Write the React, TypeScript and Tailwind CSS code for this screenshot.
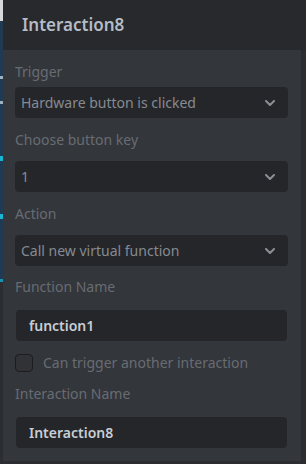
import { useState } from 'react'

function Chevron() {
  return (
    <svg width="10" height="6" viewBox="0 0 10 6" className="shrink-0">
      <polyline points="1,1 5,5 9,1" fill="none" stroke="#8a8f96" strokeWidth="2" strokeLinecap="round" strokeLinejoin="round" />
    </svg>
  )
}

function Label({ text, className = '' }: { text: string; className?: string }) {
  return <p className={`h-[20px] text-[14px] leading-[20px] text-[#686c72] ${className}`}>{text}</p>
}

function Select({ value, className = '' }: { value: string; className?: string }) {
  return (
    <div className={`flex h-[31px] items-center justify-between rounded-[4px] bg-[#252629] pl-[6px] pr-[13px] ${className}`}>
      <span className="text-[14px] leading-[20px] text-[#868b92]">{value}</span>
      <Chevron />
    </div>
  )
}

function TextInput({ value, className = '' }: { value: string; className?: string }) {
  return (
    <div className={`mx-[1px] flex h-[31px] items-center rounded-[4px] bg-[#252629] pl-[13px] ${className}`}>
      <span className="text-[14px] font-semibold leading-[20px] text-[#c8cdd4]">{value}</span>
    </div>
  )
}

export default function App() {
  const [checked, setChecked] = useState(false)

  return (
    <div className="flex h-[464px] w-[306px] bg-[#2b2d31] font-['Noto_Sans',sans-serif]">
      {/* bits of the canvas behind the panel */}
      <div className="flex w-[3px] shrink-0 flex-col">
        <div className="h-[21px] bg-[#d6d8da]" />
        <div className="h-[55px] bg-[#1f3a52]" />
        <div className="h-[3px] bg-[#9fb0bf]" />
        <div className="h-[22px] bg-[#1f3a52]" />
        <div className="h-[3px] bg-[#9fb0bf]" />
        <div className="h-[52px] bg-[#1f3a52]" />
        <div className="h-[5px] bg-[#19b6d4]" />
        <div className="h-[53px] bg-[#1f3a52]" />
        <div className="h-[5px] bg-[#19b6d4]" />
        <div className="h-[60px] bg-[#1f3a52]" />
        <div className="h-[3px] bg-[#1593b0]" />
        <div className="flex-1 bg-[#2b2d31]" />
      </div>

      <div className="flex flex-1 flex-col">
        <div className="flex h-[50px] items-center bg-[#27292d] pl-[19px]">
          <h1 className="text-[17px] font-semibold leading-[24px] text-[#b5bcc6]">Interaction8</h1>
        </div>

        <div className="mr-[5px] flex flex-col bg-[#33363b] pb-[13px] pl-[12px] pr-[13px] pt-[12px]">
          <Label text="Trigger" />
          <Select value="Hardware button is clicked" className="mt-[5px]" />

          <Label text="Choose button key" className="mt-[12px]" />
          <Select value="1" className="mt-[11px]" />

          <Label text="Action" className="mt-[12px]" />
          <Select value="Call new virtual function" className="mt-[11px]" />

          <Label text="Function Name" className="mt-[11px]" />
          <TextInput value="function1" className="mt-[13px]" />

          <label className="mt-[13px] flex h-[18px] cursor-pointer items-center gap-[10px]">
            <input
              type="checkbox"
              checked={checked}
              onChange={(e) => setChecked(e.target.checked)}
              className="peer sr-only"
            />
            <span className="h-[18px] w-[18px] rounded-[4px] border border-[#1b1c1f] bg-[#303236]" />
            <span className="text-[14px] leading-[20px] text-[#686c72]">Can trigger another interaction</span>
          </label>

          <Label text="Interaction Name" className="mt-[12px]" />
          <TextInput value="Interaction8" className="mt-[13px]" />
        </div>
      </div>
    </div>
  )
}
